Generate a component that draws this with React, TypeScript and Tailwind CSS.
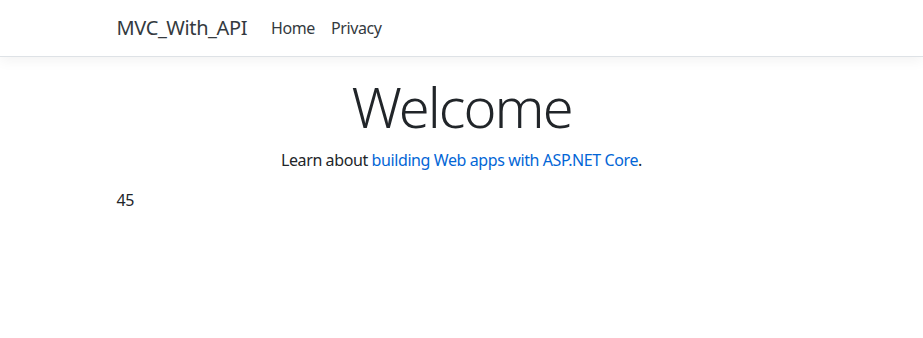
export default function App() {
  return (
    <div className="min-h-[338px] bg-white text-[#212529] text-base leading-6 tracking-[-0.025em] font-['Segoe_UI','Noto_Sans',sans-serif]">
      <header>
        <nav className="mb-4 border-b border-[#dee2e6] bg-white py-2 shadow-[0_4px_12px_rgba(0,0,0,0.05)]">
          <div className="mx-auto flex w-[720px] items-center px-[15px]">
            <a className="mr-4 py-[5px] text-xl leading-[30px] text-[#343a40]" href="#">
              MVC_With_API
            </a>
            <ul className="flex">
              <li>
                <a className="block px-2 py-2 text-[#343a40]" href="#">Home</a>
              </li>
              <li>
                <a className="block px-2 py-2 text-[#343a40]" href="#">Privacy</a>
              </li>
            </ul>
          </div>
        </nav>
      </header>
      <div className="mx-auto w-[720px] px-[15px]">
        <main className="pb-4">
          <div className="text-center">
            <h1 className="mb-2 text-[56px] font-light leading-[1.2] tracking-[-0.035em]">Welcome</h1>
            <p className="mb-4">
              Learn about{" "}
              <a className="text-[#0366d6]" href="#">building Web apps with ASP.NET Core</a>.
            </p>
          </div>
          <p>45</p>
        </main>
      </div>
    </div>
  );
}
